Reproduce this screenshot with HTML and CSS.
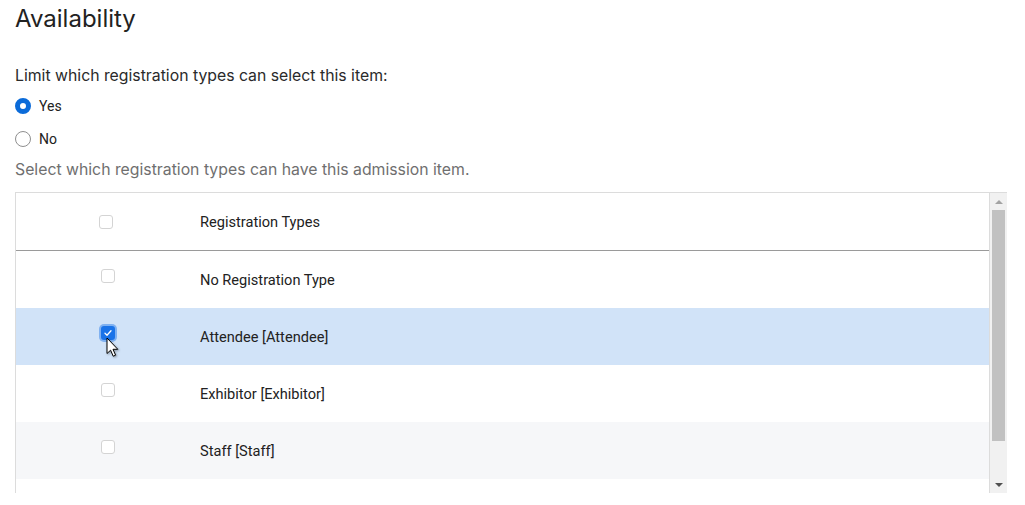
FILE: index.html
```html
<!DOCTYPE html>
<html>
<head>
<meta charset="utf-8">
<link rel="stylesheet" href="styles.css">
</head>
<body>
<div class="page">
  <h1 class="title">Availability</h1>
  <p class="question">Limit which registration types can select this item:</p>
  <div class="radios">
    <label class="radio-row"><span class="radio checked"></span><span class="radio-label">Yes</span></label>
    <label class="radio-row"><span class="radio"></span><span class="radio-label">No</span></label>
  </div>
  <p class="hint">Select which registration types can have this admission item.</p>
  <div class="grid-wrap">
    <div class="grid">
      <div class="row header">
        <div class="cell-check"><span class="checkbox"></span></div>
        <div class="cell-text">Registration Types</div>
      </div>
      <div class="row">
        <div class="cell-check"><span class="checkbox"></span></div>
        <div class="cell-text">No Registration Type</div>
      </div>
      <div class="row selected">
        <div class="cell-check">
          <span class="checkbox checked">
            <svg viewBox="0 0 14 14" width="14" height="14"><path d="M4 7.3 L6 9.2 L10 4.8" fill="none" stroke="#fff" stroke-width="1.3" stroke-linecap="round" stroke-linejoin="round"/></svg>
          </span>
          <svg class="cursor" viewBox="0 0 14 22" width="14" height="22"><path d="M1 1 L1 16.5 L4.6 13.2 L7.2 19.2 L9.6 18.2 L7 12.3 L11.8 12.3 Z" fill="#fff" stroke="#000" stroke-width="1" stroke-linejoin="round"/></svg>
        </div>
        <div class="cell-text">Attendee [Attendee]</div>
      </div>
      <div class="row">
        <div class="cell-check"><span class="checkbox"></span></div>
        <div class="cell-text">Exhibitor [Exhibitor]</div>
      </div>
      <div class="row alt">
        <div class="cell-check"><span class="checkbox"></span></div>
        <div class="cell-text">Staff [Staff]</div>
      </div>
    </div>
    <div class="scrollbar">
      <div class="arrow up"></div>
      <div class="track"><div class="thumb"></div></div>
      <div class="arrow down"></div>
    </div>
  </div>
</div>
</body>
</html>
```
FILE: styles.css
```css
html, body {
  margin: 0;
  padding: 0;
  background: #fff;
}
body {
  font-family: "Inter", "Roboto", "Liberation Sans", sans-serif;
  color: #222;
}
.page {
  padding: 0 18px 0 15px;
}
.title {
  margin: 0;
  padding-top: 4px;
  font-size: 24px;
  font-weight: 400;
  line-height: 30px;
  color: #222;
}
.question {
  margin: 32px 0 0;
  font-size: 15.8px;
  line-height: 20px;
  color: #2a2a2a;
}
.radios {
  display: flex;
  flex-direction: column;
  gap: 13px;
  margin-top: 10px;
}
.radio-row {
  display: flex;
  align-items: center;
  gap: 8px;
  height: 20px;
  font-family: "Roboto", "Liberation Sans", sans-serif;
  font-size: 14px;
  color: #222;
}
.radio {
  width: 16px;
  height: 16px;
  box-sizing: border-box;
  border-radius: 50%;
  border: 1px solid #8f8f8f;
  background: #fff;
}
.radio.checked {
  border: 5px solid #0b6bd9;
}
.hint {
  margin: 11px 0 0;
  font-size: 15.8px;
  line-height: 20px;
  color: #6f6f6f;
}
.grid-wrap {
  margin-top: 12px;
  display: flex;
  height: 300px;
  border-top: 1px solid #dcdcdc;
  border-left: 1px solid #dcdcdc;
  overflow: hidden;
}
.grid {
  flex: 1;
  border-right: 1px solid #dcdcdc;
  overflow: hidden;
  font-family: "Roboto", "Liberation Sans", sans-serif;
  font-size: 14.6px;
  color: #222;
}
.row {
  display: flex;
  align-items: center;
  height: 57px;
  background: #fff;
}
.row.header {
  border-bottom: 1px solid #9a9a9a;
}
.row.selected {
  background: #d1e3f8;
}
.row.alt {
  background: #f6f7f9;
}
.cell-check {
  position: relative;
  width: 87px;
  padding-left: 83px;
  height: 100%;
  display: flex;
  align-items: center;
}
.row:not(.header) .cell-check .checkbox {
  margin-left: 2px;
  margin-top: -8px;
}
.cell-text {
  padding-left: 14px;
}
.checkbox {
  display: block;
  width: 14px;
  height: 14px;
  box-sizing: border-box;
  border: 1px solid #d4d4d4;
  border-radius: 3px;
  background: #fff;
}
.checkbox.checked {
  border: none;
  background: #1a73e8;
  box-shadow: 0 0 0 2px rgba(26, 115, 232, 0.45);
}
.checkbox svg {
  display: block;
}
.cursor {
  position: absolute;
  left: 90px;
  top: 29px;
  filter: drop-shadow(1px 1px 1px rgba(0,0,0,0.35));
}
.scrollbar {
  width: 17px;
  background: #f1f1f1;
  display: flex;
  flex-direction: column;
}
.arrow {
  height: 17px;
  display: flex;
  align-items: center;
  justify-content: center;
}
.arrow::before {
  content: "";
  width: 0;
  height: 0;
  border-left: 4px solid transparent;
  border-right: 4px solid transparent;
}
.arrow.up::before {
  border-bottom: 4px solid #a3a3a3;
}
.arrow.down::before {
  border-top: 4px solid #505050;
}
.track {
  flex: 1;
  padding: 0 2px;
}
.thumb {
  height: 231px;
  background: #c1c1c1;
}
```
